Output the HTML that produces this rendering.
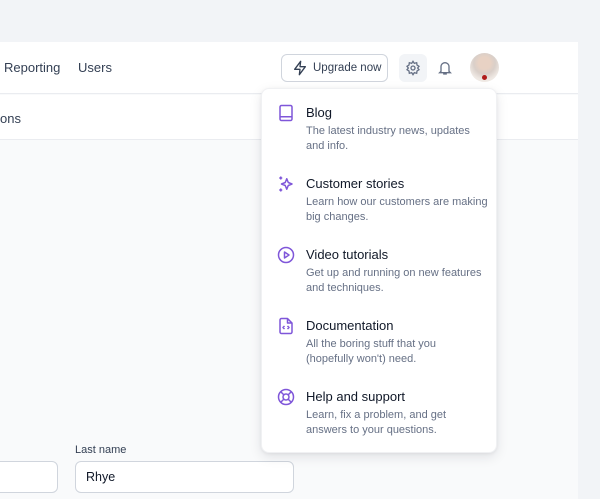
<!DOCTYPE html>
<html><head><style>
*{box-sizing:border-box;margin:0;padding:0}
body{width:600px;height:499px;overflow:hidden;background:#f2f4f7;font-family:"Liberation Sans",sans-serif;position:relative}
.panel{position:absolute;left:0;top:42px;width:578px;height:457px;background:#f9fafb}
.hdr{position:absolute;left:0;top:0;width:578px;height:52px;background:#fff;border-bottom:1px solid #eaecf0}
.sub{position:absolute;left:0;top:53px;width:578px;height:45px;background:#fff;border-bottom:1px solid #eaecf0}
.nav{position:absolute;top:18px;font-size:13px;color:#344054}
.btn{position:absolute;left:281px;top:12px;width:107px;height:28px;border:1px solid #d0d5dd;border-radius:6px;background:#fff;font-size:11.5px;line-height:26px;color:#344054;padding:0 0 0 31px;white-space:nowrap}
.gear{position:absolute;left:399px;top:12px;width:28px;height:28px;border-radius:6px;background:#f2f4f7}
.av{position:absolute;left:470px;top:11px;width:29px;height:29px;border-radius:50%;background:radial-gradient(circle at 50% 35%,#e8d2c4 0 25%,#d9cfc9 45%,#efe9e4 70%)}
.dd{position:absolute;left:261px;top:88px;width:236px;height:365px;background:#fff;border-radius:8px;box-shadow:0 4px 12px rgba(16,24,40,.1),0 1px 3px rgba(16,24,40,.06);border:1px solid #f0f1f3}
.it{position:absolute;left:15px}
.it svg{position:absolute;left:0;top:0}
.t{position:absolute;left:29px;top:1px;font-size:13px;color:#101828;white-space:nowrap}
.d{position:absolute;left:29px;top:20px;width:185px;font-size:11px;line-height:14.5px;color:#667085}
.lbl{position:absolute;left:75px;top:444px;font-size:11px;color:#344054}
.in{position:absolute;top:461px;height:32px;background:#fff;border:1px solid #d0d5dd;border-radius:6px;font-size:12.5px;color:#101828;padding:8px 10px}
</style></head><body>
<div class="panel">
 <div class="hdr">
  <div class="nav" style="left:4px">Reporting</div>
  <div class="nav" style="left:78px">Users</div>
  <div class="btn"><svg style="position:absolute;left:10px;top:5px" width="16" height="16" viewBox="0 0 24 24" fill="none" stroke="#344054" stroke-width="2" stroke-linejoin="round"><path d="M13 2L4 14h8l-1 8 9-12h-8l1-8z"/></svg>Upgrade now</div>
  <div class="gear"><svg style="position:absolute;left:6px;top:6px" width="16" height="16" viewBox="0 0 24 24" fill="none" stroke="#667085" stroke-width="2"><circle cx="12" cy="12" r="3"/><path d="M12 2l2 3 3.5-1 .5 3.5 3 2-2 2.5 2 2.5-3 2-.5 3.5-3.5-1-2 3-2-3-3.5 1-.5-3.5-3-2 2-2.5-2-2.5 3-2L6.5 4 10 5z"/></svg></div>
  <svg style="position:absolute;left:437px;top:18px" width="16" height="16" viewBox="0 0 24 24" fill="none" stroke="#667085" stroke-width="2" stroke-linecap="round"><path d="M6 17V10a6 6 0 0 1 12 0v7l2 2H4zM10 21h4"/></svg>
  <div class="av"><div style="position:absolute;left:12px;top:22px;width:5px;height:5px;border-radius:50%;background:#b01c1c"></div></div>
 </div>
 <div class="sub"><div class="nav" style="left:0;top:16px">ons</div></div>
</div>
<div class="lbl">Last name</div>
<div class="in" style="left:-10px;width:68px"></div>
<div class="in" style="left:75px;width:219px">Rhye</div>
<div class="dd">
 <div class="it" style="top:15px"><svg width="18" height="18" viewBox="0 0 24 24" fill="none" stroke="#7f56d9" stroke-width="2"><rect x="4" y="2" width="16" height="20" rx="2"/><path d="M4 17h16"/></svg><div class="t">Blog</div><div class="d">The latest industry news, updates<br>and info.</div></div>
 <div class="it" style="top:86px"><svg width="18" height="18" viewBox="0 0 24 24" fill="none" stroke="#7f56d9" stroke-width="2" stroke-linejoin="round"><path d="M13 5l2 5 5 2-5 2-2 5-2-5-5-2 5-2zM5 2v4M3 4h4M5 18v4M3 20h4"/></svg><div class="t">Customer stories</div><div class="d">Learn how our customers are making<br>big changes.</div></div>
 <div class="it" style="top:157px"><svg width="18" height="18" viewBox="0 0 24 24" fill="none" stroke="#7f56d9" stroke-width="2" stroke-linejoin="round"><circle cx="12" cy="12" r="10"/><path d="M10 8l6 4-6 4z"/></svg><div class="t">Video tutorials</div><div class="d">Get up and running on new features<br>and techniques.</div></div>
 <div class="it" style="top:228px"><svg width="18" height="18" viewBox="0 0 24 24" fill="none" stroke="#7f56d9" stroke-width="2" stroke-linejoin="round"><path d="M14 2H6a2 2 0 0 0-2 2v16a2 2 0 0 0 2 2h12a2 2 0 0 0 2-2V8zM14 2v6h6M10 12l-2 2 2 2M14 12l2 2-2 2"/></svg><div class="t">Documentation</div><div class="d">All the boring stuff that you<br>(hopefully won't) need.</div></div>
 <div class="it" style="top:299px"><svg width="18" height="18" viewBox="0 0 24 24" fill="none" stroke="#7f56d9" stroke-width="2"><circle cx="12" cy="12" r="10"/><circle cx="12" cy="12" r="4"/><path d="M5 5l4 4M15 15l4 4M19 5l-4 4M9 15l-4 4"/></svg><div class="t">Help and support</div><div class="d">Learn, fix a problem, and get<br>answers to your questions.</div></div>
</div>
</body></html>
